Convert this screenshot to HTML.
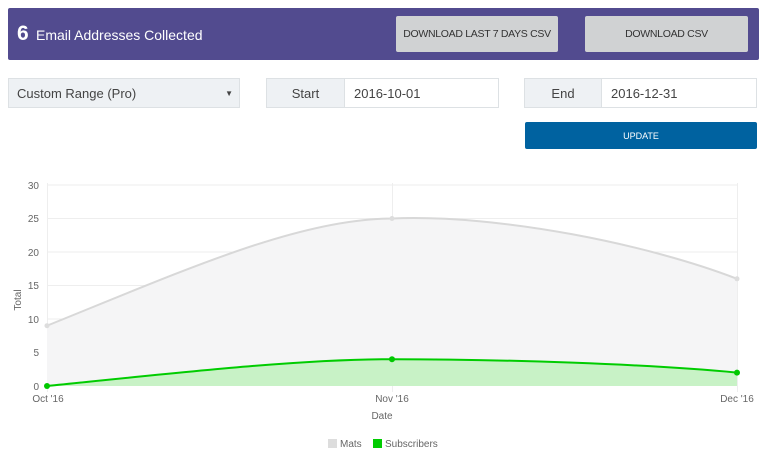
<!DOCTYPE html>
<html><head><style>
body{margin:0;width:768px;height:454px;background:#fff;font-family:"Liberation Sans",sans-serif;position:relative;overflow:hidden}
.a{position:absolute;box-sizing:border-box}
.hdr{left:8px;top:8px;width:751px;height:52px;background:#524b8f;border-radius:2px}
.btn{background:#d0d2d3;border-radius:2px;font-size:10.5px;letter-spacing:-0.3px;white-space:nowrap;color:#333;display:flex;align-items:center;justify-content:center}
.lbl{background:#eef1f4;border:1px solid #dde1e4;font-size:13px;color:#444;display:flex;align-items:center;justify-content:center}
.inp{background:#fff;border:1px solid #dde1e4;font-size:13px;color:#444;display:flex;align-items:center;padding-left:9px}
</style></head><body>
<div class="a hdr"></div>
<div class="a" style="left:17px;top:22px;color:#fff;font-size:21px;font-weight:bold;line-height:24px">6</div>
<div class="a" style="left:36px;top:27px;color:#fff;font-size:14px">Email Addresses Collected</div>
<div class="a btn" style="left:396px;top:16px;width:162px;height:36px">DOWNLOAD LAST 7 DAYS CSV</div>
<div class="a btn" style="left:585px;top:16px;width:163px;height:36px">DOWNLOAD CSV</div>
<div class="a lbl" style="left:8px;top:78px;width:232px;height:30px;justify-content:flex-start;padding-left:8px">Custom Range (Pro)<span style="position:absolute;right:6px;font-size:8px">▼</span></div>
<div class="a lbl" style="left:266px;top:78px;width:79px;height:30px">Start</div>
<div class="a inp" style="left:344px;top:78px;width:155px;height:30px">2016-10-01</div>
<div class="a lbl" style="left:524px;top:78px;width:78px;height:30px">End</div>
<div class="a inp" style="left:601px;top:78px;width:156px;height:30px">2016-12-31</div>
<div class="a" style="left:525px;top:122px;width:232px;height:27px;background:#0062a0;border-radius:2px;color:#fff;font-size:9px;display:flex;align-items:center;justify-content:center">UPDATE</div>
<svg class="a" style="left:0;top:0" width="768" height="454" font-family="Liberation Sans, sans-serif" font-size="10" fill="#666">
<g stroke="#eee" stroke-width="1">
<line x1="47" y1="185" x2="737" y2="185"/><line x1="47" y1="218.5" x2="737" y2="218.5"/><line x1="47" y1="252" x2="737" y2="252"/><line x1="47" y1="285.5" x2="737" y2="285.5"/><line x1="47" y1="319" x2="737" y2="319"/><line x1="47" y1="352.5" x2="737" y2="352.5"/>
<line x1="47.5" y1="183" x2="47.5" y2="392"/><line x1="392.5" y1="183" x2="392.5" y2="392"/><line x1="737.5" y1="183" x2="737.5" y2="392"/>
</g>
<path d="M47,325.7 C185,270 300,218.5 392,218.5 C500,214 650,245 737,278.8 L737,386 L47,386Z" fill="#f5f5f6"/>
<path d="M47,325.7 C185,270 300,218.5 392,218.5 C500,214 650,245 737,278.8" fill="none" stroke="#d8d8d8" stroke-width="2"/>
<path d="M47,386 C185,372 300,359.2 392,359.2 C500,359.2 650,364 737,372.6 L737,386Z" fill="#c8f2c6"/>
<path d="M47,386 C185,372 300,359.2 392,359.2 C500,359.2 650,364 737,372.6" fill="none" stroke="#00cc00" stroke-width="2"/>
<g fill="#ddd"><circle cx="47" cy="325.7" r="2.5"/><circle cx="392" cy="218.5" r="2.5"/><circle cx="737" cy="278.8" r="2.5"/></g>
<g fill="#00c800"><circle cx="47" cy="386" r="3"/><circle cx="392" cy="359.2" r="3"/><circle cx="737" cy="372.6" r="3"/></g>
<g text-anchor="end"><text x="39" y="189">30</text><text x="39" y="222">25</text><text x="39" y="256">20</text><text x="39" y="289">15</text><text x="39" y="323">10</text><text x="39" y="356">5</text><text x="39" y="390">0</text></g>
<g text-anchor="middle"><text x="48" y="402">Oct '16</text><text x="392" y="402">Nov '16</text><text x="737" y="402">Dec '16</text><text x="382" y="419">Date</text></g>
<text transform="translate(21,300) rotate(-90)" text-anchor="middle">Total</text>
<rect x="328" y="439" width="9" height="9" fill="#ddd"/><text x="340" y="447">Mats</text>
<rect x="373" y="439" width="9" height="9" fill="#00cc00"/><text x="385" y="447">Subscribers</text>
</svg>
</body></html>
